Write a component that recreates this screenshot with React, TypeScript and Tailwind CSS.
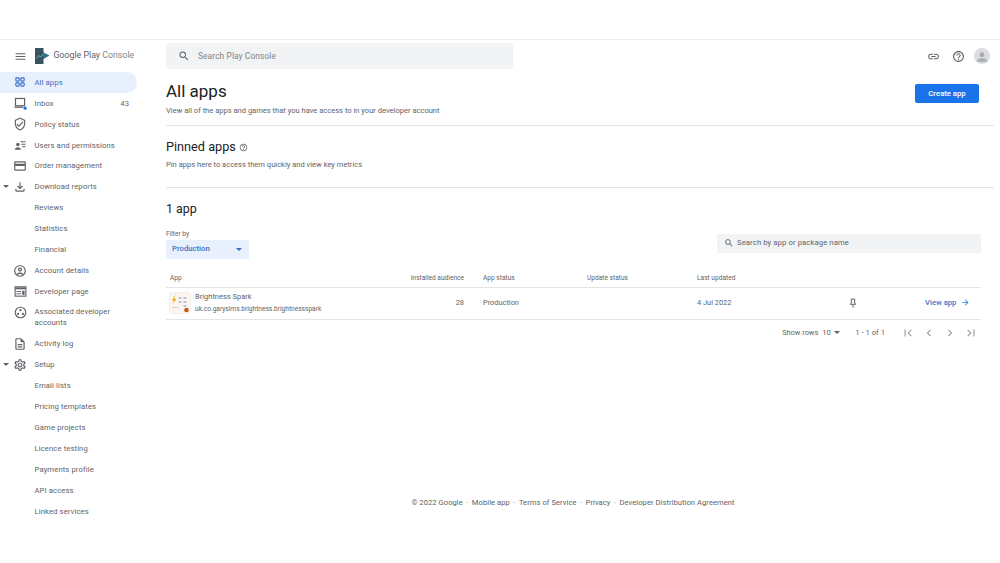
import React from 'react';
import {
  MdArrowForward,
  MdChevronLeft,
  MdChevronRight,
  MdCreditCard,
  MdFirstPage,
  MdHelpOutline,
  MdLastPage,
  MdLink,
  MdMenu,
  MdOutlineAccountCircle,
  MdOutlineDescription,
  MdOutlineFileDownload,
  MdOutlineSettings,
  MdOutlineVerifiedUser,
  MdPerson,
  MdSearch,
} from 'react-icons/md';

const AppsIcon = () => (
  <svg viewBox="0 0 12 12" className="h-[10px] w-[10px]" fill="none" stroke="currentColor" strokeWidth="1.4">
    <rect x="1" y="1" width="4" height="4" rx="1" />
    <rect x="7" y="1" width="4" height="4" rx="1" />
    <rect x="1" y="7" width="4" height="4" rx="1" />
    <rect x="7" y="7" width="4" height="4" rx="1" />
  </svg>
);

const InboxIcon = () => (
  <svg viewBox="0 0 14 14" className="h-[13px] w-[13px]" fill="none">
    <rect x="1.6" y="1.6" width="9.8" height="7.8" stroke="#5f6368" strokeWidth="1.3" />
    <path d="M0.5 11h9.5" stroke="#5f6368" strokeWidth="1.4" />
    <circle cx="12" cy="12" r="1.7" fill="#1a73e8" />
  </svg>
);

const UsersIcon = () => (
  <svg viewBox="0 0 14 14" className="h-[12px] w-[12px]" fill="#5f6368">
    <circle cx="4.5" cy="6.5" r="2" />
    <path d="M0.8 12.5c0-2 2-3 3.7-3s3.7 1 3.7 3z" />
    <path d="M7.5 2.5h6v1.2h-6zM8.5 5.5h5v1.2h-5zM9.5 8.5h4v1.2h-4z" />
  </svg>
);

const DevPageIcon = () => (
  <svg viewBox="0 0 14 14" className="h-[13px] w-[13px]" fill="none" stroke="#5f6368">
    <rect x="1.2" y="2" width="11.6" height="10" strokeWidth="1.2" />
    <path d="M1.2 3.6h11.6" strokeWidth="2" />
    <path d="M2.5 7h5M2.5 9.5h5" strokeWidth="1" />
    <rect x="8.8" y="6.2" width="2.6" height="4.4" fill="#5f6368" strokeWidth="0" />
  </svg>
);

const AssociatedIcon = () => (
  <svg viewBox="0 0 14 14" className="h-[13px] w-[13px]" fill="#5f6368">
    <circle cx="7" cy="7" r="5.7" fill="none" stroke="#5f6368" strokeWidth="1.2" />
    <circle cx="7" cy="4.5" r="1.2" />
    <circle cx="4.3" cy="8.6" r="1.2" />
    <circle cx="9.7" cy="8.6" r="1.2" />
  </svg>
);

const PinIcon = () => (
  <svg viewBox="0 0 10 10" className="h-[10px] w-[10px]" fill="none" stroke="#5f6368" strokeWidth="1">
    <path d="M3.3 1h3.4v4l1 1.3H2.3l1-1.3z" />
    <path d="M5 6.5V9.5" />
  </svg>
);

const Logo = () => (
  <svg viewBox="0 0 16 18" className="h-[18px] w-[16px]">
    <path d="M1 1 15.5 8.6 1 17z" fill="#33708a" />
    <rect x="1" y="1" width="8.5" height="16" fill="#3a5361" />
    <path d="M2.5 11.5 5 8.5l1.5 1.5L10 6.5" stroke="#8cc2d4" strokeWidth="0.8" fill="none" />
  </svg>
);

const AppIcon = () => (
  <svg viewBox="0 0 22 22" className="h-[22px] w-[22px]">
    <rect x="0.5" y="0.5" width="21" height="21" rx="3" fill="#fbf7f0" stroke="#ece6dc" strokeWidth="0.6" />
    <path d="M6.5 2.5 3 8.5h2.2L3.5 12l4-5H5.2z" fill="#e8a21c" />
    <path d="M9.5 5h3v2h-3zM14.5 5h3v2h-3zM9.5 9h3v2h-3zM14.5 9h3v2h-3zM14.5 13h3v2h-3z" fill="#b9c4cf" />
    <path d="M3 15h7v1H3z" fill="#d5d5d5" />
    <circle cx="17.5" cy="18" r="2.3" fill="#c6541a" />
  </svg>
);

type NavItem = {
  label: string;
  icon?: React.ReactNode;
  caret?: boolean;
  badge?: string;
  active?: boolean;
  tall?: boolean;
};

const gray = 'text-[14px] text-[#5f6368]';

const navItems: NavItem[] = [
  { label: 'All apps', icon: <AppsIcon />, active: true },
  { label: 'Inbox', icon: <InboxIcon />, badge: '43' },
  { label: 'Policy status', icon: <MdOutlineVerifiedUser className={gray} /> },
  { label: 'Users and permissions', icon: <UsersIcon /> },
  { label: 'Order management', icon: <MdCreditCard className={gray} /> },
  { label: 'Download reports', icon: <MdOutlineFileDownload className={gray} />, caret: true },
  { label: 'Reviews' },
  { label: 'Statistics' },
  { label: 'Financial' },
  { label: 'Account details', icon: <MdOutlineAccountCircle className={gray} /> },
  { label: 'Developer page', icon: <DevPageIcon /> },
  { label: 'Associated developer accounts', icon: <AssociatedIcon />, tall: true },
  { label: 'Activity log', icon: <MdOutlineDescription className={gray} /> },
  { label: 'Setup', icon: <MdOutlineSettings className={gray} />, caret: true },
  { label: 'Email lists' },
  { label: 'Pricing templates' },
  { label: 'Game projects' },
  { label: 'Licence testing' },
  { label: 'Payments profile' },
  { label: 'API access' },
  { label: 'Linked services' },
];

const Caret = ({ className }: { className: string }) => (
  <span className={`h-0 w-0 border-x-[3px] border-t-[3px] border-x-transparent ${className}`} />
);

const Sidebar = () => (
  <nav className="w-[137px] shrink-0">
    {navItems.map((item) =>
      item.tall ? (
        <div key={item.label} className="flex h-[31px] items-start pt-[4px] text-[#5f6368]">
          <span className="flex w-[34.5px] shrink-0 justify-center pl-[13px] pr-[7.5px]">{item.icon}</span>
          <span className="w-[90px] text-[7.7px] leading-[11px] tracking-[0.1px]">{item.label}</span>
        </div>
      ) : (
        <div
          key={item.label}
          className={`flex h-[20.95px] items-center rounded-r-full ${
            item.active ? 'bg-[#e8f0fe] text-[#3c6fc4]' : 'text-[#5f6368]'
          }`}
        >
          <span className="relative flex w-[34.5px] shrink-0 justify-center pl-[13px] pr-[7.5px]">
            {item.caret && <Caret className="absolute left-[3px] top-[5px] border-t-[#5f6368]" />}
            {item.icon}
          </span>
          <span className="flex-1 text-[7.7px] tracking-[0.1px]">{item.label}</span>
          {item.badge && <span className="pr-[8px] text-[7.7px]">{item.badge}</span>}
        </div>
      ),
    )}
  </nav>
);

const Header = () => (
  <header className="flex h-[32px] items-center">
    <div className="flex w-[166px] shrink-0 items-center">
      <MdMenu className="ml-[14px] text-[13px] text-[#5f6368]" />
      <span className="ml-[7px] flex items-center">
        <Logo />
        <span className="ml-[3.5px] text-[8.8px] whitespace-nowrap text-[#5f6368]">
          Google Play <span className="text-[#80868b]">Console</span>
        </span>
      </span>
    </div>
    <div className="flex h-[26px] w-[347px] items-center rounded-[3px] bg-[#f1f3f4] pl-[12px]">
      <MdSearch className="text-[12px] text-[#5f6368]" />
      <span className="ml-[8px] text-[8.4px] tracking-[0.1px] text-[#80868b]">Search Play Console</span>
    </div>
    <div className="ml-auto flex items-center pr-[10px] text-[#5f6368]">
      <MdLink className="text-[13px]" />
      <MdHelpOutline className="ml-[12px] text-[13px]" />
      <span className="mb-[1px] ml-[9px] flex h-[16px] w-[16px] items-end justify-center overflow-hidden rounded-full bg-[#dadce0]">
        <MdPerson className="text-[14px] text-[#a9acb0]" />
      </span>
    </div>
  </header>
);

const Main = () => (
  <main className="flex min-w-0 flex-1 flex-col pl-[29px] pr-[6px]">
    <div className="flex justify-between border-b border-[#e3e5e7] pb-[8px]">
      <div>
        <h1 className="pt-[8px] text-[17px] leading-[22px] text-[#202124]">All apps</h1>
        <p className="pt-[3px] text-[7.55px] leading-[12px] text-[#5f6368]">
          View all of the apps and games that you have access to in your developer account
        </p>
      </div>
      <button
        type="button"
        className="mr-[15px] mt-[12px] h-[19px] w-[64px] rounded-[2px] bg-[#1a73e8] text-[7.7px] font-medium text-white"
      >
        Create app
      </button>
    </div>
    <div className="border-b border-[#e3e5e7] pb-[16px]">
      <div className="flex items-center pt-[13px]">
        <h2 className="text-[12.7px] leading-[16px] text-[#202124]">Pinned apps</h2>
        <MdHelpOutline className="ml-[3px] text-[9px] text-[#5f6368]" />
      </div>
      <p className="pt-[3.5px] text-[7.55px] leading-[12px] text-[#5f6368]">Pin apps here to access them quickly and view key metrics</p>
    </div>
    <h2 className="pt-[14px] text-[12.4px] leading-[14px] text-[#202124]">1 app</h2>
    <div className="pr-[13px]">
      <div className="flex items-end justify-between pt-[14px]">
        <div>
          <div className="text-[6.6px] leading-[9px] text-[#5f6368]">Filter by</div>
          <div className="mt-[1px] flex h-[19px] w-[83px] items-center justify-between rounded-[2px] bg-[#e8f0fe] pl-[6px] pr-[7px] text-[7.7px] font-medium text-[#3c6fc4]">
            Production
            <Caret className="border-t-[#3c6fc4]" />
          </div>
        </div>
        <div className="mb-[6px] flex h-[19px] w-[264px] items-center bg-[#f1f3f4] pl-[7px] text-[7.7px] text-[#5f6368]">
          <MdSearch className="text-[10px]" />
          <span className="ml-[3px] tracking-[0.1px]">Search by app or package name</span>
        </div>
      </div>
      <div className="mt-[10px] grid h-[19px] grid-cols-[245px_53px_123px_110px_1fr] items-center border-b border-[#e3e5e7] pt-[2px] text-[6.6px] text-[#5f6368]">
        <span className="pl-[4px]">App</span>
        <span className="justify-self-end whitespace-nowrap">Installed audience</span>
        <span className="pl-[19px]">App status</span>
        <span>Update status</span>
        <span>Last updated</span>
      </div>
      <div className="grid h-[32px] grid-cols-[245px_53px_123px_110px_1fr] items-center border-b border-[#e3e5e7] text-[7.4px] text-[#5f6368]">
        <div className="flex items-center pl-[3px]">
          <AppIcon />
          <div className="ml-[4px] pb-[1.5px]">
            <div className="text-[7.5px] leading-[12px]">Brightness Spark</div>
            <div className="pt-[1px] text-[6.6px] leading-[10px]">uk.co.garysims.brightness.brightnessspark</div>
          </div>
        </div>
        <span className="text-right">28</span>
        <span className="pl-[19px]">Production</span>
        <span />
        <div className="flex items-center">
          <span className="w-[151px]">4 Jul 2022</span>
          <PinIcon />
          <span className="ml-[67px] text-[7.7px] font-medium text-[#3c78c8]">View app</span>
          <MdArrowForward className="ml-[5px] text-[9px] text-[#1a73e8]" />
        </div>
      </div>
      <div className="flex h-[26px] items-center justify-end pr-[3px] text-[7.7px] text-[#5f6368]">
        <span className="text-[7.4px]">Show rows</span>
        <span className="ml-[4px] flex w-[22px] items-center gap-[3px]">
          10
          <Caret className="border-t-[#5f6368]" />
        </span>
        <span className="ml-[11px]">1 - 1 of 1</span>
        <span className="ml-[16px] flex items-center gap-[7px] text-[14px] text-[#9aa0a6]">
          <MdFirstPage />
          <MdChevronLeft />
          <MdChevronRight />
          <MdLastPage />
        </span>
      </div>
    </div>
    <footer className="mt-auto flex justify-center gap-[3.5px] pb-[16px] pr-[14px] text-[7.6px] tracking-[0.05px] text-[#5f6368]">
      <span>© 2022 Google</span>
      <span>·</span>
      <span>Mobile app</span>
      <span>·</span>
      <span>Terms of Service</span>
      <span>·</span>
      <span>Privacy</span>
      <span>·</span>
      <span>Developer Distribution Agreement</span>
    </footer>
  </main>
);

export default function App() {
  return (
    <div className="h-[563px] w-[1000px] overflow-hidden bg-white pt-[39px] font-['Roboto',sans-serif]">
      <div className="border-t border-[#eeeeee]">
        <Header />
        <div className="flex h-[452px]">
          <Sidebar />
          <Main />
        </div>
      </div>
    </div>
  );
}
